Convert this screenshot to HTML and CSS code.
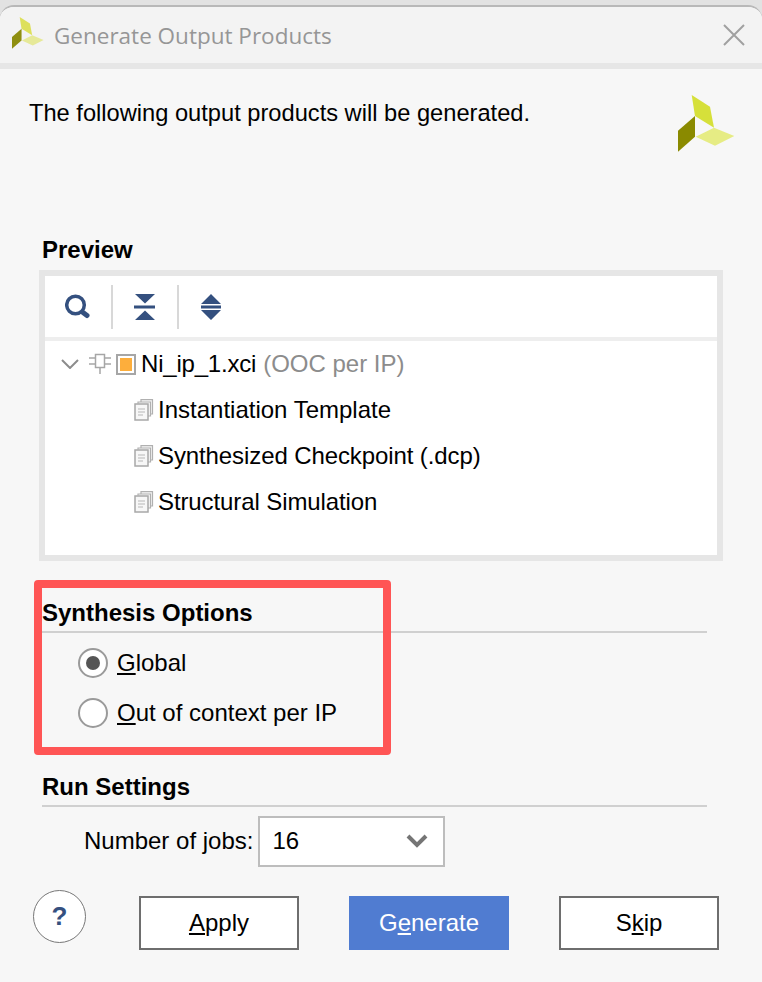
FILE: index.html
```html
<!DOCTYPE html>
<html lang="en">
<head>
    <meta charset="UTF-8">
    <meta name="viewport" content="width=device-width, initial-scale=1.0">
    <title>Generate Output Products</title>
    <link rel="stylesheet" href="styles.css">
</head>
<body>

<div class="window">
    <header class="titlebar">
        <svg class="title-logo" width="32" height="32" viewBox="0 0 57 57">
            <polygon points="13.700,0 32,11.700 36,32.700 17,21" fill="#dde05c"/>
            <polygon points="17,21 17,41.700 0,56.700 0,35.700" fill="#8f8f10"/>
            <polygon points="36,32.700 56.300,41 37,50.700 17.700,41.700" fill="#e6e998"/>
        </svg>
        <span class="title-text">Generate Output Products</span>
        <svg class="close-icon" width="22" height="22" viewBox="0 0 22 22">
            <path d="M1 1 L21 21 M21 1 L1 21" stroke="#a0a0a0" stroke-width="2" fill="none"/>
        </svg>
    </header>

    <main class="content">
        <div class="intro">
            <p class="intro-text">The following output products will be generated.</p>
            <svg class="brand-logo" width="57" height="57" viewBox="0 0 57 57">
                <polygon points="13.700,0 32,11.700 36,32.700 17,21" fill="#d6e03a"/>
                <polygon points="17,21 17,41.700 0,56.700 0,35.700" fill="#8a8a00"/>
                <polygon points="36,32.700 56.300,41 37,50.700 17.700,41.700" fill="#e6ec84"/>
            </svg>
        </div>

        <h2 class="section-title preview-title">Preview</h2>
        <div class="preview">
            <div class="toolbar">
                <svg class="tool" width="26" height="27" viewBox="0 0 26 27">
                    <circle cx="10.500" cy="12" r="8.800" fill="none" stroke="#34507f" stroke-width="3.500"/>
                    <path d="M18 19.500 L22 22.500" stroke="#34507f" stroke-width="5" stroke-linecap="round"/>
                </svg>
                <span class="tool-sep"></span>
                <svg class="tool" width="22" height="26" viewBox="0 0 22 26">
                    <path d="M1 0 H21 L11 9.500 Z M1 26 H21 L11 16.500 Z" fill="#34507f"/>
                    <rect x="0" y="11.500" width="21" height="3" fill="#34507f"/>
                </svg>
                <span class="tool-sep"></span>
                <svg class="tool" width="22" height="26" viewBox="0 0 22 26">
                    <path d="M11 0 L21 10 H1 Z M11 26 L21 16 H1 Z" fill="#34507f"/>
                    <rect x="1" y="11.500" width="20" height="3" fill="#34507f"/>
                </svg>
            </div>
            <div class="tree">
                <div class="tree-row root-row">
                    <svg class="chevron" width="18" height="10" viewBox="0 0 18 10">
                        <path d="M1 1 L9 9 L17 1" fill="none" stroke="#8c8c8c" stroke-width="2"/>
                    </svg>
                    <svg class="chip" width="22" height="22" viewBox="0 0 22 22">
                        <path d="M6.500 1.500 H15.500 V14.500 H6.500 Z M0 5 H6 M0 11 H6 M16 5 H22 M16 11 H22 M11 15 V21" fill="#fff" stroke="#a6a6a6" stroke-width="1.500"/>
                    </svg>
                    <span class="ip-box"><span class="ip-fill"></span></span>
                    <span class="ip-name">Ni_ip_1.xci</span>
                    <span class="muted">(OOC per IP)</span>
                </div>
                <div class="tree-row file-row">
                    <svg class="doc" width="20" height="22" viewBox="0 0 20 22"><use href="#doc-icon"/></svg>
                    <span>Instantiation Template</span>
                </div>
                <div class="tree-row file-row">
                    <svg class="doc" width="20" height="22" viewBox="0 0 20 22"><use href="#doc-icon"/></svg>
                    <span class="tight">Synthesized Checkpoint (.dcp)</span>
                </div>
                <div class="tree-row file-row">
                    <svg class="doc" width="20" height="22" viewBox="0 0 20 22"><use href="#doc-icon"/></svg>
                    <span class="tight">Structural Simulation</span>
                </div>
            </div>
        </div>

        <section class="options">
            <h2 class="section-title">Synthesis Options</h2>
            <div class="radio-row">
                <span class="radio radio-on"></span>
                <span><u>G</u>lobal</span>
            </div>
            <div class="radio-row">
                <span class="radio"></span>
                <span><u>O</u>ut of context per IP</span>
            </div>
            <div class="callout"></div>
        </section>

        <section class="run-settings">
            <h2 class="section-title">Run Settings</h2>
            <div class="jobs-row">
                <span class="jobs-label">Number of <u>j</u>obs:</span>
                <div class="select-box">
                    <span>16</span>
                    <svg width="22" height="14" viewBox="0 0 22 14">
                        <path d="M2 2 L11 11 L20 2" fill="none" stroke="#757575" stroke-width="4"/>
                    </svg>
                </div>
            </div>
        </section>

        <div class="actions">
            <span class="help">?</span>
            <button class="btn"><u>A</u>pply</button>
            <button class="btn btn-primary">G<u>e</u>nerate</button>
            <button class="btn">S<u>k</u>ip</button>
        </div>
    </main>
</div>

<svg class="defs" width="0" height="0">
    <defs>
        <g id="doc-icon">
            <path d="M7 3 V0.700 H18.500 V15 H15" fill="#f7f7f7" stroke="#b0b0b0" stroke-width="1.200"/>
            <path d="M4 4.500 V3 H16.500 V17 H14" fill="#f7f7f7" stroke="#b0b0b0" stroke-width="1.200"/>
            <rect x="1" y="5" width="13" height="16" fill="#f7f7f7" stroke="#a8a8a8" stroke-width="1.500"/>
            <path d="M4 10 H11 M4 13 H11 M4 16 H9" stroke="#b8b8b8" stroke-width="1.200"/>
        </g>
    </defs>
</svg>

</body>
</html>
```

FILE: styles.css
```css
html, body {
    margin: 0;
    padding: 0;
    background-color: #e2e2e2;
}
body {
    font-family: "Liberation Sans", Arial, sans-serif;
    font-size: 24px;
    color: #000;
    width: 762px;
    height: 982px;
    overflow: hidden;
}
.window {
    margin-top: 5px;
    height: 977px;
    box-sizing: border-box;
    border-top: 2px solid #b8b8b8;
    border-radius: 14px 14px 0 0;
    background-color: #f7f7f7;
    overflow: hidden;
}
.titlebar {
    height: 56px;
    background-color: #f3f3f3;
    border-bottom: 6px solid #e6e6e6;
    display: flex;
    align-items: center;
    padding: 0 17px 0 12px;
}
.title-logo {
    flex: none;
    margin: -4px 10px 0 0;
}
.title-text {
    font-family: "Open Sans", sans-serif;
    font-size: 22.500px;
    color: #969696;
    flex: 1;
}
.content {
    position: relative;
    padding: 0 39px 0 29px;
}
.intro {
    display: flex;
    justify-content: space-between;
    height: 168px;
}
.intro-text {
    margin: 31px 0 0;
    font-size: 23.660px;
}
.brand-logo {
    margin: 26px -12px 0 0;
}
.section-title {
    font-size: 24px;
    line-height: 26px;
    font-weight: bold;
    margin: 0;
}
.preview-title {
    padding-left: 13px;
    height: 33px;
}
.preview {
    margin-left: 10px;
    border: 6px solid #e6e6e6;
    background: white;
    height: 279px;
}
.toolbar {
    height: 61px;
    border-bottom: 4px solid #eeeeee;
    display: flex;
    align-items: center;
    padding-left: 20px;
}
.tool {
    flex: none;
}
.tool-sep {
    width: 2px;
    height: 44px;
    background-color: #d8d8d8;
    margin: 0 21px;
}
.tool-sep:first-of-type {
    margin-left: 20px;
}
.tree-row {
    height: 46px;
    display: flex;
    align-items: center;
}
.root-row {
    padding-left: 16px;
}
.file-row {
    padding-left: 89px;
}
.chevron {
    flex: none;
    margin-right: 10px;
}
.chip {
    flex: none;
    margin-right: 5px;
}
.ip-box {
    flex: none;
    width: 20px;
    height: 21px;
    box-sizing: border-box;
    border: 2px solid #a6a6a6;
    background: white;
    padding: 2px;
    margin-right: 5px;
}
.ip-fill {
    display: block;
    height: 100%;
    background-color: #fdae3c;
}
.ip-name {
    letter-spacing: -0.200px;
}
.muted {
    color: #8c8c8c;
    margin-left: 7px;
}
.tight {
    letter-spacing: -0.100px;
}
.doc {
    flex: none;
    margin-right: 4px;
}
.options {
    margin-top: 39px;
    padding-left: 13px;
    position: relative;
}
.options .section-title,
.run-settings .section-title {
    height: 33px;
    box-sizing: border-box;
    border-bottom: 2px solid #d0d0d0;
    margin-right: 16px;
}
.radio-row {
    height: 50px;
    display: flex;
    align-items: center;
    padding-left: 36px;
}
.radio-row:first-of-type {
    margin-top: 5px;
}
.radio {
    width: 30px;
    height: 30px;
    box-sizing: border-box;
    border: 2px solid #9a9a9a;
    border-radius: 50%;
    background: white;
    margin-right: 9px;
    display: flex;
    align-items: center;
    justify-content: center;
}
.radio-on::after {
    content: "";
    width: 14px;
    height: 14px;
    border-radius: 50%;
    background-color: #555;
}
.callout {
    position: absolute;
    left: 5px;
    top: -20px;
    width: 357px;
    height: 175px;
    box-sizing: border-box;
    border: 8px solid #ff5555;
    border-radius: 4px;
    pointer-events: none;
}
.run-settings {
    margin-top: 36px;
    padding-left: 13px;
}
.jobs-row {
    display: flex;
    align-items: center;
    margin-top: 9px;
    padding-left: 42px;
}
.jobs-label {
    padding-bottom: 2px;
}
.select-box {
    width: 187px;
    height: 51px;
    box-sizing: border-box;
    border: 2px solid #bdbdbd;
    background: white;
    margin-left: 5px;
    display: flex;
    align-items: center;
    justify-content: space-between;
    padding: 0 15px 2px 12px;
}
.actions {
    position: relative;
    margin-top: 29px;
    display: flex;
    gap: 50px;
    padding-left: 110px;
}
.help {
    position: absolute;
    left: 4px;
    top: -6px;
    width: 53px;
    height: 53px;
    box-sizing: border-box;
    border: 1px solid #777;
    border-radius: 50%;
    background: white;
    color: #34507f;
    font-size: 26px;
    font-weight: bold;
    display: flex;
    align-items: center;
    justify-content: center;
}
.btn {
    width: 160px;
    height: 54px;
    box-sizing: border-box;
    border: 2px solid #6e6e6e;
    background: white;
    color: #000;
    font-family: inherit;
    font-size: 24px;
    padding: 0;
}
.btn-primary {
    background-color: #507cd1;
    border: none;
    color: #fff;
}
.defs {
    position: absolute;
}
```
